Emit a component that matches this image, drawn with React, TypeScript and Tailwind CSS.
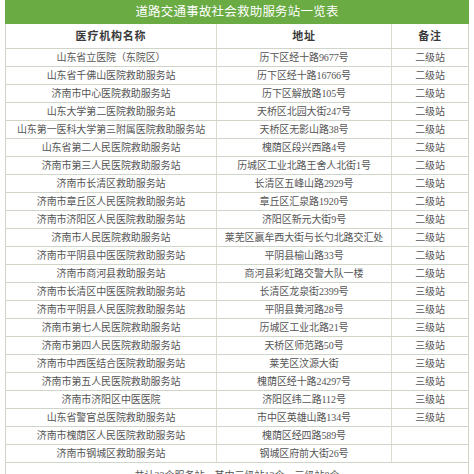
const font = "[font-family:'Liberation_Serif','Noto_Sans_CJK_SC',serif]";

type Station = {
  name: string;
  address: string;
  level: string;
};

const stations: Station[] = [
  { name: "山东省立医院（东院区）", address: "历下区经十路9677号", level: "二级站" },
  { name: "山东省千佛山医院救助服务站", address: "历下区经十路16766号", level: "二级站" },
  { name: "济南市中心医院救助服务站", address: "历下区解放路105号", level: "二级站" },
  { name: "山东大学第二医院救助服务站", address: "天桥区北园大街247号", level: "二级站" },
  { name: "山东第一医科大学第三附属医院救助服务站", address: "天桥区无影山路38号", level: "二级站" },
  { name: "山东省第二人民医院救助服务站", address: "槐荫区段兴西路4号", level: "二级站" },
  { name: "济南市第三人民医院救助服务站", address: "历城区工业北路王舍人北街1号", level: "二级站" },
  { name: "济南市长清区救助服务站", address: "长清区五峰山路2929号", level: "二级站" },
  { name: "济南市章丘区人民医院救助服务站", address: "章丘区汇泉路1920号", level: "二级站" },
  { name: "济南市济阳区人民医院救助服务站", address: "济阳区新元大街9号", level: "二级站" },
  { name: "济南市人民医院救助服务站", address: "莱芜区嬴牟西大街与长勺北路交汇处", level: "二级站" },
  { name: "济南市平阴县中医医院救助服务站", address: "平阴县榆山路33号", level: "二级站" },
  { name: "济南市商河县救助服务站", address: "商河县彩虹路交警大队一楼", level: "二级站" },
  { name: "济南市长清区中医医院救助服务站", address: "长清区龙泉街2399号", level: "三级站" },
  { name: "济南市平阴县人民医院救助服务站", address: "平阴县黄河路28号", level: "三级站" },
  { name: "济南市第七人民医院救助服务站", address: "历城区工业北路21号", level: "三级站" },
  { name: "济南市第四人民医院救助服务站", address: "天桥区师范路50号", level: "三级站" },
  { name: "济南市中西医结合医院救助服务站", address: "莱芜区汶源大街", level: "三级站" },
  { name: "济南市第五人民医院救助服务站", address: "槐荫区经十路24297号", level: "三级站" },
  { name: "济南市济阳区中医医院", address: "济阳区纬二路112号", level: "三级站" },
  { name: "山东省警官总医院救助服务站", address: "市中区英雄山路134号", level: "三级站" },
  { name: "济南市槐荫区人民医院救助服务站", address: "槐荫区经四路589号", level: "" },
  { name: "济南市钢城区救助服务站", address: "钢城区府前大街26号", level: "" },
];

const App = () => {
  return (
    <div className={`w-[474px] h-[474px] overflow-hidden bg-white ${font}`}>
      <div className="ml-[5px] w-[464px]">
        <div className="h-[24px] bg-[#6aab43] flex items-center justify-center text-white text-[12.5px] tracking-[0.2px]">
          道路交通事故社会救助服务站一览表
        </div>
        <div className="border-x border-[#cfd5c8]">
          <div className="grid grid-cols-[211px_175px_76px] h-[25px] border-b border-[#cfd5c8] font-semibold text-[#3a3a3a] text-[11px] tracking-[0.8px]">
            <div className="flex items-center justify-center border-r border-[#d8ddd2]">医疗机构名称</div>
            <div className="flex items-center justify-center border-r border-[#d8ddd2]">地址</div>
            <div className="flex items-center justify-center">备注</div>
          </div>
          {stations.map((s, i) => (
            <div
              key={i}
              className="grid grid-cols-[211px_175px_76px] h-[18px] border-b border-[#cfd5c8] text-[#555] text-[10px] tracking-[-0.1px]"
            >
              <div className="flex items-center justify-center border-r border-[#d8ddd2] whitespace-nowrap">{s.name}</div>
              <div className="flex items-center justify-center border-r border-[#d8ddd2] whitespace-nowrap">{s.address}</div>
              <div className="flex items-center justify-center">{s.level}</div>
            </div>
          ))}
          <div className="h-[20px] flex items-start justify-center pt-[5px] text-[#555] text-[10px]">
            共计23个服务站，其中二级站13个，三级站8个
          </div>
        </div>
      </div>
    </div>
  );
};

export default App;
